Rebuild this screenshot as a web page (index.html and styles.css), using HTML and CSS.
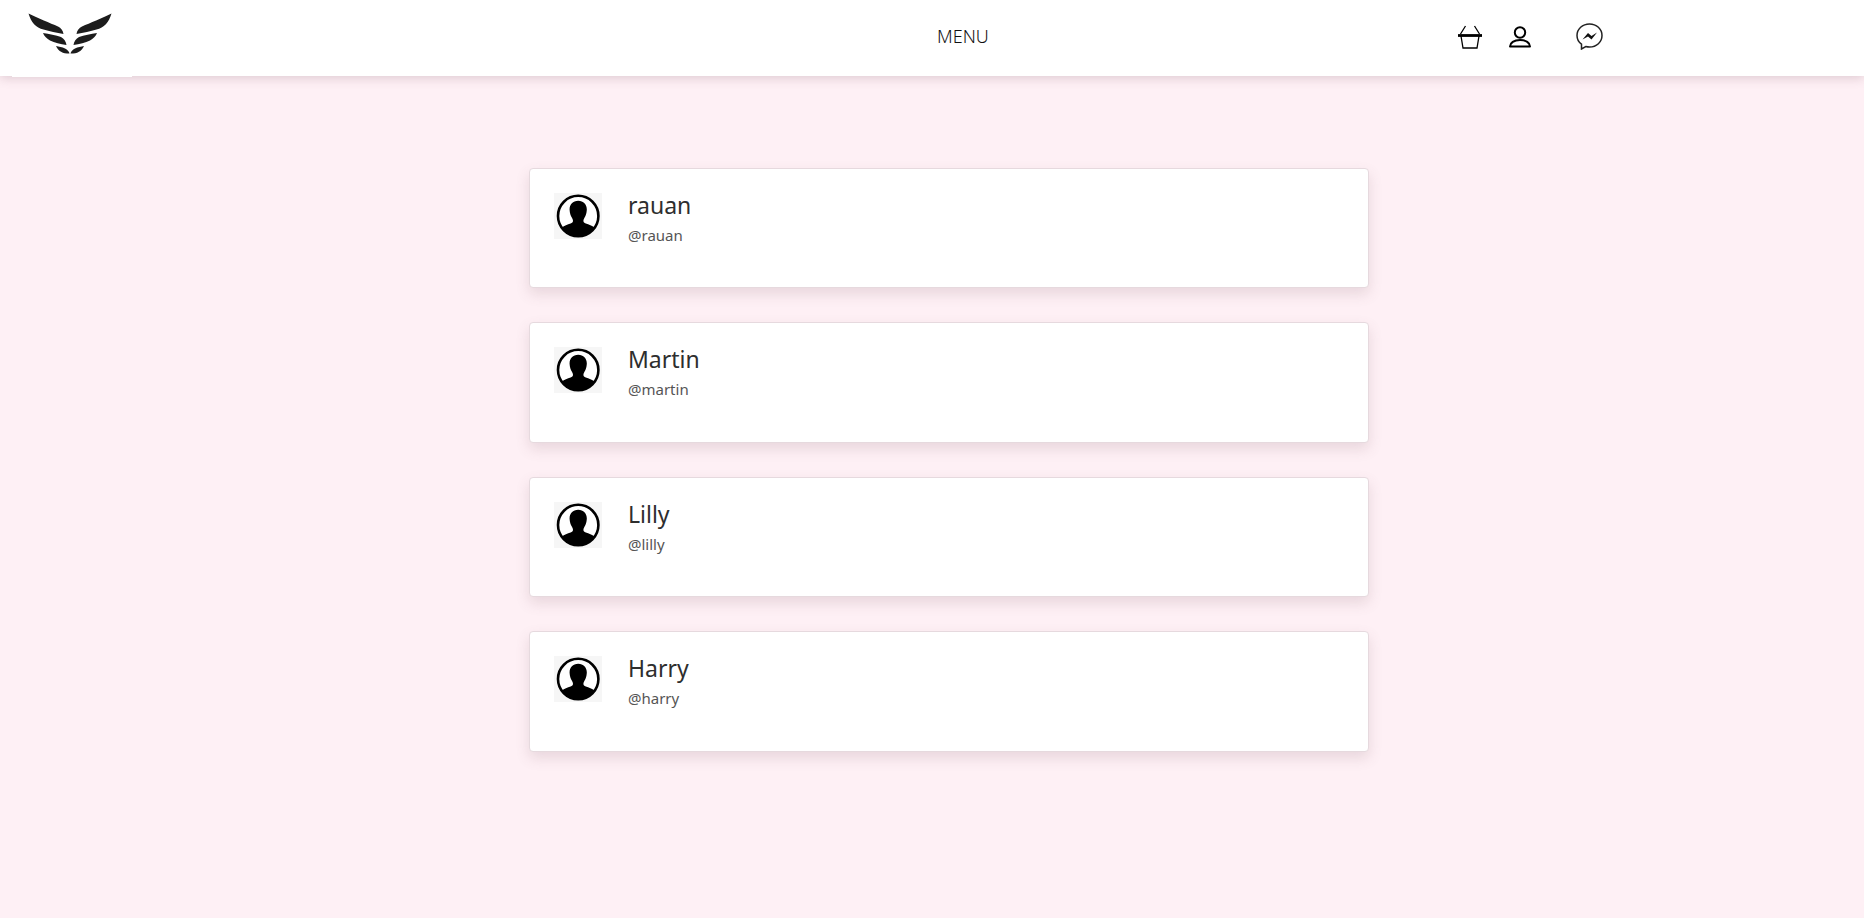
FILE: index.html
```html
<!DOCTYPE html>
<html lang="en">
<head>
  <meta charset="UTF-8" />
  <title>Users</title>
  <link rel="stylesheet" href="styles.css">
</head>
<body>
  <svg class="defs" width="0" height="0">
    <symbol id="avatar" viewBox="0 0 48 46">
      <clipPath id="avatar-clip"><circle cx="24.200" cy="23" r="20" /></clipPath>
      <rect width="48" height="46" fill="#f6f6f6" />
      <circle cx="24.200" cy="23" r="20.200" fill="#fff" stroke="#000" stroke-width="2.600" />
      <path clip-path="url(#avatar-clip)" d="M24.200 7.700c-5.500 0-8.900 4-8.600 9.300.2 3 1 5.500 2.200 7.500.7 1.200 1.200 2.200 1.200 3.300 0 1.400-.9 2.200-2.400 2.800-3 1.200-6.500 2-8.600 4L4 46h41l-4.600-11.400c-2.100-2-5.600-2.800-8.600-4-1.500-.6-2.400-1.400-2.400-2.800 0-1.100.5-2.100 1.200-3.300 1.200-2 2-4.500 2.200-7.500.3-5.300-3.100-9.300-8.600-9.300z" fill="#000" />
    </symbol>
    <symbol id="wing" viewBox="0 0 84 44">
      <path d="M.5.500C10 5 22 10 30 13.500c3 1.500 5 4 5.500 7.500-7-1.500-14-2.500-20-4.500C8 15 3 9 .5.500z" />
      <path d="M15 20c6 1 13 2 18 4 3 1.500 5 4.500 5.500 8-6-1-12-2-16.500-4.500C19 26 16 23 15 20z" />
      <path d="M28 33c3 .5 6 1 9 2.500 2.500 1 4 3 4.500 5-3.500 0-6.500-.5-8-1.500C31 38 29 35.500 28 33z" />
    </symbol>
  </svg>

  <header class="topbar">
    <a class="logo" href="#">
      <svg width="84" height="44" viewBox="0 0 84 44" fill="#1c1c1c">
        <use href="#wing" width="84" height="44" />
        <use href="#wing" width="84" height="44" transform="matrix(-1 0 0 1 84 0)" />
      </svg>
    </a>
    <nav class="menu"><a href="#">MENU</a></nav>
    <div class="icons">
      <a href="#" class="icon-basket">
        <svg width="26" height="26" viewBox="0 0 26 26" fill="none" stroke="#000">
          <path d="M1 12.500h24" stroke-width="2.800" />
          <path d="M4 13l2 12h14l2-12M3.500 11l5-8M22.500 11l-5-8" stroke-width="1.300" />
        </svg>
      </a>
      <a href="#" class="icon-user">
        <svg width="24" height="24" viewBox="0 0 24 24" fill="none" stroke="#000" stroke-width="2">
          <circle cx="12" cy="8.500" r="5.200" />
          <path d="M2 22.500c0-3.500 4-6.500 10-6.500s10 3 10 6.500z" stroke-linejoin="round" />
        </svg>
      </a>
      <a href="#" class="icon-chat">
        <svg width="27" height="27" viewBox="0 0 27 27" fill="none">
          <path d="M13.500 1C6.500 1 1 6 1 12.500c0 3.500 1.500 6.500 4.500 8.700V26l4.300-2.500c1.200.3 2.400.5 3.700.5C20.500 24 26 19 26 12.500S20.500 1 13.500 1z" stroke="#222" stroke-width="1.500" />
          <path d="M6.500 16.500l5.500-6.500 3.500 3 5.500-3.500-5.500 7-3.500-3z" fill="#111" />
        </svg>
      </a>
    </div>
  </header>

  <main class="users">
    <div class="user-card">
      <svg class="avatar"><use href="#avatar" /></svg>
      <div class="user-info">
        <h3>rauan</h3>
        <p>@rauan</p>
      </div>
    </div>
    <div class="user-card">
      <svg class="avatar"><use href="#avatar" /></svg>
      <div class="user-info">
        <h3>Martin</h3>
        <p>@martin</p>
      </div>
    </div>
    <div class="user-card">
      <svg class="avatar"><use href="#avatar" /></svg>
      <div class="user-info">
        <h3>Lilly</h3>
        <p>@lilly</p>
      </div>
    </div>
    <div class="user-card">
      <svg class="avatar"><use href="#avatar" /></svg>
      <div class="user-info">
        <h3>Harry</h3>
        <p>@harry</p>
      </div>
    </div>
  </main>
</body>
</html>
```

FILE: styles.css
```css
body {
  margin: 0;
  min-height: 918px;
  background: #fef0f5;
  font-family: 'Noto Sans', 'Open Sans', sans-serif;
  color: #2b2b2b;
  overflow: hidden;
}

a {
  color: inherit;
  text-decoration: none;
}

.defs {
  position: absolute;
}

.topbar {
  display: flex;
  align-items: center;
  height: 76px;
  background: #fff;
  box-shadow: 0 2px 10px rgba(120, 80, 95, 0.24);
}

.logo {
  align-self: flex-start;
  box-sizing: border-box;
  width: 120px;
  height: 77px;
  margin-left: 12px;
  padding: 13px 0 0 16px;
  background: #fff;
  position: relative;
}

.menu {
  margin-left: 805px;
  margin-top: -4px;
  width: 52px;
  font-size: 18px;
  font-weight: 300;
  color: #111;
  white-space: nowrap;
}

.icons {
  display: flex;
  align-items: center;
  margin-left: 468px;
  margin-top: -4px;
}

.icons a {
  display: flex;
}

.icon-user {
  margin-left: 25px;
}

.icon-chat {
  margin-left: 44px;
}

.users {
  display: flex;
  flex-direction: column;
  gap: 34px;
  width: 840px;
  margin: 91.6px 0 0 529px;
}

.user-card {
  display: flex;
  align-items: flex-start;
  box-sizing: border-box;
  height: 120.5px;
  padding: 24px 24px 0;
  background: #fff;
  border: 1px solid #e6d9de;
  border-radius: 4px;
  box-shadow: 0 6px 14px rgba(120, 80, 95, 0.16);
}

.avatar {
  width: 48px;
  height: 46px;
  flex-shrink: 0;
}

.user-info {
  margin-left: 26px;
}

.user-info h3 {
  margin: 0;
  margin-top: -3px;
  font-size: 23px;
  font-weight: 400;
  line-height: 30px;
  color: #2e2e2e;
}

.user-info p {
  margin: 3px 0 0;
  font-size: 15px;
  line-height: 24px;
  color: #555;
}
```
